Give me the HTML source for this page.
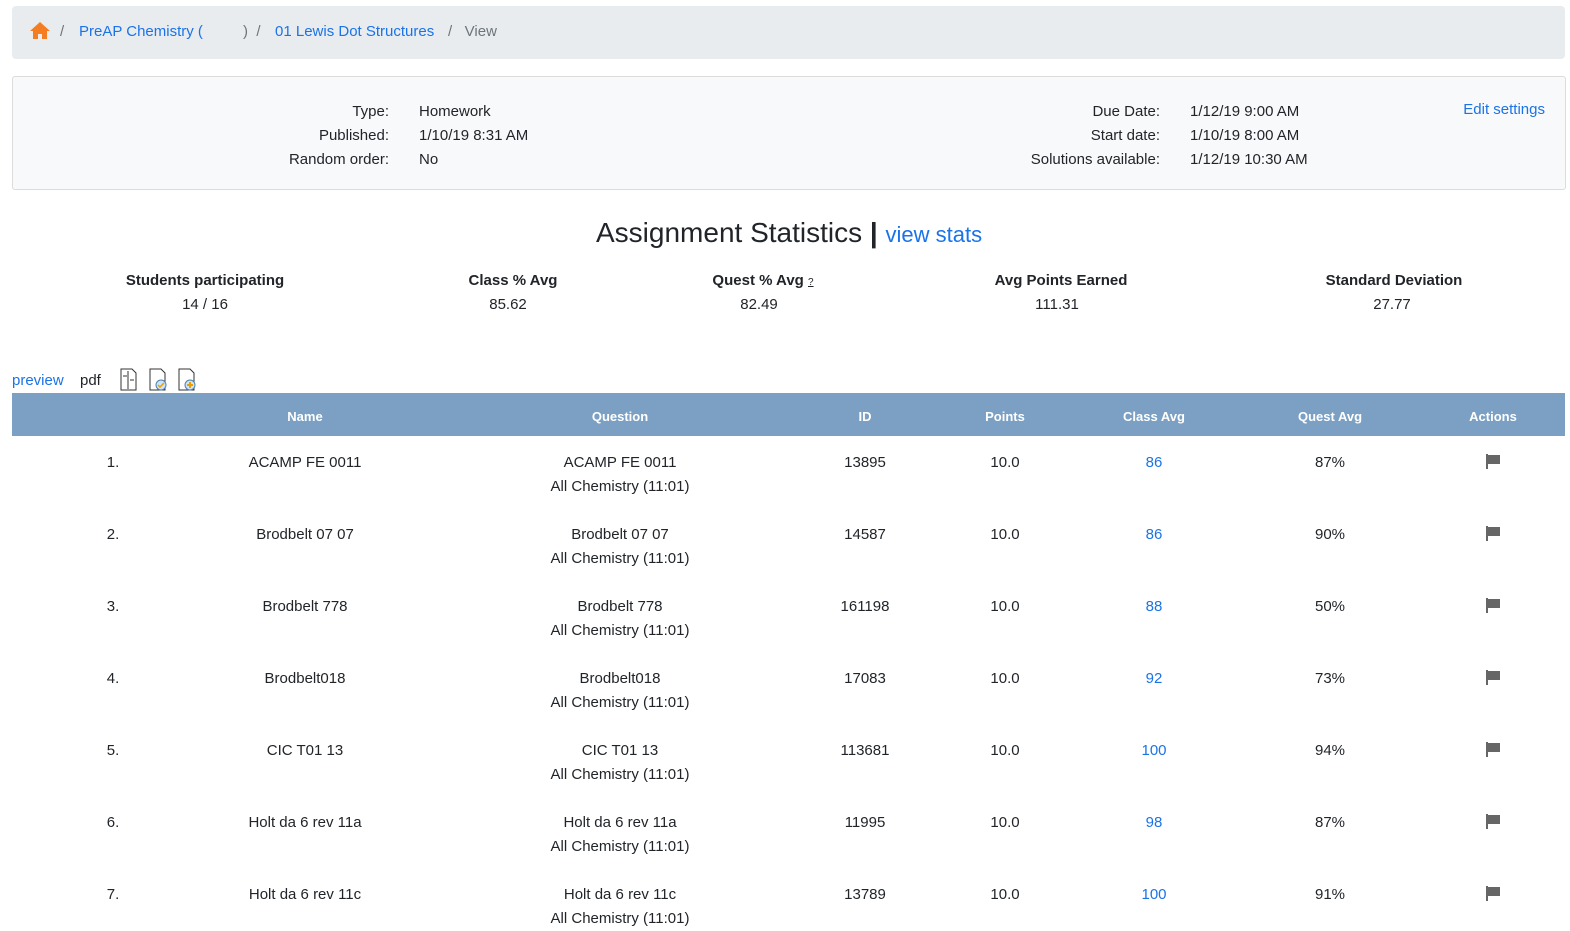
<!DOCTYPE html>
<html><head><meta charset="utf-8"><style>
body{margin:0;width:1570px;height:914px;overflow:hidden;background:#fff;font-family:"Liberation Sans",sans-serif;font-size:15px;color:#212529;position:relative}
.a{position:absolute;white-space:nowrap}
.c{position:absolute;white-space:nowrap;transform:translateX(-50%);text-align:center}
.r{position:absolute;white-space:nowrap;text-align:right}
a,.l{color:#1a73e8;text-decoration:none}
.crumb{position:absolute;left:12px;top:6px;width:1553px;height:53px;background:#e9ecef;border-radius:4px}
.info{position:absolute;left:12px;top:76px;width:1552px;height:112px;background:#f8f9fa;border:1px solid #dcdcdc;border-radius:3px}
.th{position:absolute;left:12px;top:393px;width:1553px;height:43px;background:#7ba0c4}
.b{font-weight:bold}
.h{color:#fff;font-weight:bold;font-size:13px;top:409px}
</style></head><body>
<div class="crumb"></div>
<svg class="a" style="left:30px;top:21px" width="20" height="18" viewBox="0 0 20 18"><path d="M10 1L0 10h3v8h5v-5h4v5h5v-8h3z" fill="#f57c1f"/></svg>
<div class="a" style="left:60px;top:23px;color:#6c757d">/</div>
<div class="a l" style="left:79px;top:23px">PreAP Chemistry (</div>
<div class="a" style="left:243px;top:23px;color:#6c757d">) &nbsp;/</div>
<div class="a l" style="left:275px;top:23px">01 Lewis Dot Structures</div>
<div class="a" style="left:448px;top:23px;color:#6c757d">/ &nbsp; View</div>

<div class="info"></div>
<div class="r" style="right:1181px;top:100px;line-height:24px">Type:<br>Published:<br>Random order:</div>
<div class="a" style="left:419px;top:100px;line-height:24px">Homework<br>1/10/19 8:31 AM<br>No</div>
<div class="r" style="right:410px;top:100px;line-height:24px">Due Date:<br>Start date:<br>Solutions available:</div>
<div class="a" style="left:1190px;top:100px;line-height:24px">1/12/19 9:00 AM<br>1/10/19 8:00 AM<br>1/12/19 10:30 AM</div>
<div class="r l" style="right:25px;top:101px">Edit settings</div>

<div class="a" style="left:596px;top:217px;font-size:28px">Assignment Statistics <span style="font-weight:bold">|</span> <span class="l" style="font-size:22px">view stats</span></div>

<div class="c b" style="left:205px;top:272px">Students participating</div><div class="c" style="left:205px;top:296px">14 / 16</div>
<div class="c b" style="left:513px;top:272px">Class % Avg</div><div class="c" style="left:508px;top:296px">85.62</div>
<div class="c b" style="left:763px;top:272px">Quest % Avg <span style="font-size:10px;font-weight:normal;text-decoration:underline">?</span></div><div class="c" style="left:759px;top:296px">82.49</div>
<div class="c b" style="left:1061px;top:272px">Avg Points Earned</div><div class="c" style="left:1057px;top:296px">111.31</div>
<div class="c b" style="left:1394px;top:272px">Standard Deviation</div><div class="c" style="left:1392px;top:296px">27.77</div>

<div class="a l" style="left:12px;top:372px">preview</div>
<div class="a" style="left:80px;top:372px">pdf</div>
<svg class="a" style="left:120px;top:368px" width="80" height="24"><g fill="#fff" stroke="#333"><path d="M1 1h11l4 4v17H1z"/><path d="M30 1h11l4 4v17H30z"/><path d="M59 1h11l4 4v17H59z"/></g><path d="M8 3v18M3 8h4M10 12h4" stroke="#333"/><circle cx="41" cy="17" r="5" fill="#cfe3f5" stroke="#4a7fb5"/><path d="M38 17l2 2 4-4" stroke="#e8a000" fill="none" stroke-width="1.5"/><circle cx="70" cy="17" r="5" fill="#cfe3f5" stroke="#4a7fb5"/><path d="M70 14v6M67 17h6" stroke="#e8a000" stroke-width="2"/></svg>

<div class="th"></div>
<div class="c h" style="left:305px">Name</div>
<div class="c h" style="left:620px">Question</div>
<div class="c h" style="left:865px">ID</div>
<div class="c h" style="left:1005px">Points</div>
<div class="c h" style="left:1154px">Class Avg</div>
<div class="c h" style="left:1330px">Quest Avg</div>
<div class="c h" style="left:1493px">Actions</div>

<div id="rows"></div>
<script>
var d=[["ACAMP FE 0011","13895","86","87%"],["Brodbelt 07 07","14587","86","90%"],["Brodbelt 778","161198","88","50%"],["Brodbelt018","17083","92","73%"],["CIC T01 13","113681","100","94%"],["Holt da 6 rev 11a","11995","98","87%"],["Holt da 6 rev 11c","13789","100","91%"]];
var h="";d.forEach(function(r,i){var t=454+72*i;
h+='<div class="c" style="left:113px;top:'+t+'px">'+(i+1)+'.</div>';
h+='<div class="c" style="left:305px;top:'+t+'px">'+r[0]+'</div>';
h+='<div class="c" style="left:620px;top:'+t+'px;line-height:24px;margin-top:-3px">'+r[0]+'<br>All Chemistry (11:01)</div>';
h+='<div class="c" style="left:865px;top:'+t+'px">'+r[1]+'</div>';
h+='<div class="c" style="left:1005px;top:'+t+'px">10.0</div>';
h+='<div class="c l" style="left:1154px;top:'+t+'px">'+r[2]+'</div>';
h+='<div class="c" style="left:1330px;top:'+t+'px">'+r[3]+'</div>';
h+='<svg class="a" style="left:1485px;top:'+(t-1)+'px" width="16" height="16"><path d="M2 1v15" stroke="#666" stroke-width="2"/><path d="M3 2h12v9H3z" fill="#666"/></svg>';});
document.getElementById("rows").innerHTML=h;
</script>
</body></html>
